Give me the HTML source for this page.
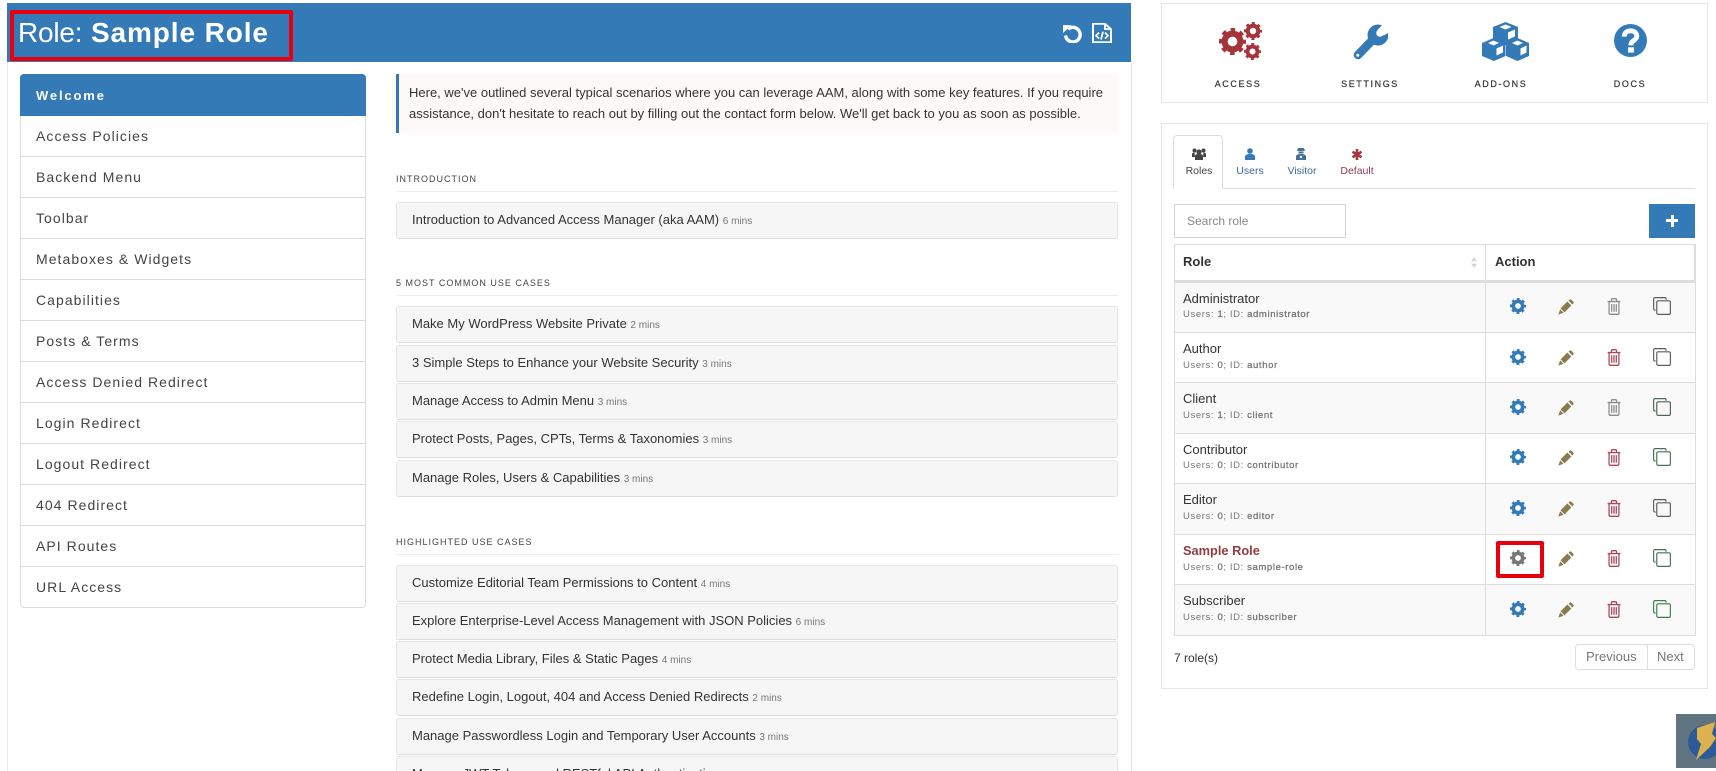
<!DOCTYPE html>
<html><head><meta charset="utf-8"><title>Role: Sample Role</title>
<style>
html,body{margin:0;padding:0;width:1716px;height:771px;overflow:hidden;background:#fff;font-family:"Liberation Sans",Arial,sans-serif;color:#333}
#p{position:relative;width:1716px;height:771px;overflow:hidden}
#p div,#p svg{position:absolute;box-sizing:border-box}
.t{white-space:nowrap}
.m{left:21px;width:344px;height:41px;border-top:1px solid #ddd;padding-left:15px;font-size:14px;letter-spacing:1.05px;line-height:40px;color:#444}
.h{left:396px;font-size:9px;letter-spacing:1px;color:#444;line-height:12px;white-space:nowrap}
.l{left:396px;width:722px;height:1px;background:#eee}
.i{left:396px;width:722px;height:37px;background:#f7f6f7;border:1px solid #e6e6e6;border-bottom-color:#ddd;border-radius:3px;padding-left:15px;font-size:13px;line-height:34px;color:#333;white-space:nowrap}
.i span{font-size:10px;color:#777}
.tab{font-size:10.5px;top:165px;line-height:12px;text-align:center;width:60px}
.lab{top:78px;font-size:9px;letter-spacing:1.6px;color:#333;line-height:12px;text-align:center;width:100px;-webkit-text-stroke:.2px #333}
.row{left:1174px;width:521px;border-bottom:1px solid #ddd}
.n{left:1183px;font-size:13px;line-height:16px;color:#333;white-space:nowrap}
.s{left:1183px;font-size:9.5px;line-height:12px;color:#777;letter-spacing:.62px;white-space:nowrap}
.s b{font-weight:normal;-webkit-text-stroke:.3px #777}
</style></head><body><div id="p">
<svg width="0" height="0" style="left:0;top:0"><defs>
<symbol id="g" viewBox="0 0 24 24"><circle cx="12" cy="12" r="7" fill="none" stroke="currentColor" stroke-width="5.4"/><circle cx="12" cy="12" r="10" fill="none" stroke="currentColor" stroke-width="4" stroke-dasharray="3.93 3.93" stroke-dashoffset="1.96"/></symbol>
<symbol id="pn" viewBox="0 0 24 24"><path fill="currentColor" d="M3.800 14L14 3.800l6 6L9.800 20zM3.200 15.500l5.100 5.100L.5 23.500zM15.800 2.500l1.400-1.400c.8-.8 2-.8 2.800 0l2.900 2.900c.8.8.8 2 0 2.800L21.500 8.200z"/></symbol>
<symbol id="tr" viewBox="0 0 16 20"><path fill="none" stroke="currentColor" stroke-width="1.500" d="M.5 4.200h15M2.200 4.200v13.300c0 1 .6 1.700 1.600 1.700h8.400c1 0 1.600-.7 1.600-1.700V4.200M5 4V2.200C5 1.300 5.600.8 6.400.8h3.200c.8 0 1.400.5 1.400 1.400V4M5.300 7.200v9M8 7.200v9M10.700 7.200v9"/></symbol>
<symbol id="cp" viewBox="0 0 20 20"><path fill="none" stroke="currentColor" stroke-width="1.300" d="M3 14.500H2.200C1.300 14.500.7 13.900.7 13V2.200C.7 1.300 1.300.7 2.200.7H13c.9 0 1.500.6 1.500 1.500V3"/><rect x="4.200" y="4.200" width="15.100" height="15.100" rx="1.500" fill="none" stroke="currentColor" stroke-width="1.300"/></symbol>
</defs></svg>

<!-- content frame lines -->
<div style="left:7px;top:62px;width:1px;height:709px;background:#eaeaea"></div>
<div style="left:1131px;top:62px;width:1px;height:709px;background:#e4e4e4"></div>

<!-- header -->
<div style="left:7px;top:3px;width:1124px;height:59px;background:#337ab7"></div>
<div style="left:10px;top:10px;width:283px;height:51px;border:4px solid #e8000f;border-radius:2px"></div>
<div class="t" style="left:18px;top:15px;line-height:36px;font-size:28px;color:#fff;letter-spacing:-.2px">Role: <b style="letter-spacing:.9px;margin-left:1px">Sample Role</b></div>
<svg style="left:1063px;top:24px" width="19" height="19" viewBox="0 0 19 19"><path fill="none" stroke="#fff" stroke-width="3.400" d="M5 5.200A7.300 7.300 0 1 1 2.600 11.500"/><path fill="#fff" d="M0 1l8.500.3L0 9z"/></svg>
<svg style="left:1092px;top:23px" width="20" height="20" viewBox="0 0 20 23" preserveAspectRatio="none"><path fill="none" stroke="#fff" stroke-width="2" d="M1 1h12l6 6v15H1zM13 1v6h6"/><path fill="none" stroke="#fff" stroke-width="1.800" d="M7 11l-3 3.500L7 18M13 11l3 3.500L13 18M11 10l-2 9"/></svg>

<!-- left menu -->
<div style="left:20px;top:74px;width:346px;height:534px;border:1px solid #ddd;border-radius:4px;background:#fff"></div>
<div class="m" style="top:116px;border-top:0">Access Policies</div>
<div class="m" style="top:156px">Backend Menu</div>
<div class="m" style="top:197px">Toolbar</div>
<div class="m" style="top:238px">Metaboxes &amp; Widgets</div>
<div class="m" style="top:279px">Capabilities</div>
<div class="m" style="top:320px">Posts &amp; Terms</div>
<div class="m" style="top:361px">Access Denied Redirect</div>
<div class="m" style="top:402px">Login Redirect</div>
<div class="m" style="top:443px">Logout Redirect</div>
<div class="m" style="top:484px">404 Redirect</div>
<div class="m" style="top:525px">API Routes</div>
<div class="m" style="top:566px">URL Access</div>
<div style="left:20px;top:74px;width:346px;height:42px;background:#337ab7;border-radius:4px 4px 0 0;padding-left:16px;font-size:13px;font-weight:bold;letter-spacing:1.85px;line-height:43px;color:#fff">Welcome</div>

<!-- callout -->
<div style="left:396px;top:74px;width:722px;height:59px;background:#fdf9f9;border-left:3px solid #337ab7;padding:9px 0 0 10px;font-size:13px;line-height:20.500px;color:#333;white-space:nowrap">Here, we've outlined several typical scenarios where you can leverage AAM, along with some key features. If you require<br>assistance, don't hesitate to reach out by filling out the contact form below. We'll get back to you as soon as possible.</div>

<div class="h" style="top:173px">INTRODUCTION</div><div class="l" style="top:191px"></div>
<div class="i" style="top:202px">Introduction to Advanced Access Manager (aka AAM) <span>6 mins</span></div>

<div class="h" style="top:277px">5 MOST COMMON USE CASES</div><div class="l" style="top:295px"></div>
<div class="i" style="top:306px">Make My WordPress Website Private <span>2 mins</span></div>
<div class="i" style="top:345px">3 Simple Steps to Enhance your Website Security <span>3 mins</span></div>
<div class="i" style="top:383px">Manage Access to Admin Menu <span>3 mins</span></div>
<div class="i" style="top:421px">Protect Posts, Pages, CPTs, Terms &amp; Taxonomies <span>3 mins</span></div>
<div class="i" style="top:460px">Manage Roles, Users &amp; Capabilities <span>3 mins</span></div>

<div class="h" style="top:536px">HIGHLIGHTED USE CASES</div><div class="l" style="top:554px"></div>
<div class="i" style="top:565px">Customize Editorial Team Permissions to Content <span>4 mins</span></div>
<div class="i" style="top:603px">Explore Enterprise-Level Access Management with JSON Policies <span>6 mins</span></div>
<div class="i" style="top:641px">Protect Media Library, Files &amp; Static Pages <span>4 mins</span></div>
<div class="i" style="top:679px">Redefine Login, Logout, 404 and Access Denied Redirects <span>2 mins</span></div>
<div class="i" style="top:718px">Manage Passwordless Login and Temporary User Accounts <span>3 mins</span></div>
<div class="i" style="top:756px">Manage JWT Tokens and RESTful API Authentication</div>

<!-- top right panel -->
<div style="left:1161px;top:3px;width:547px;height:100px;border:1px solid #e6e6e6"></div>
<svg style="left:1219px;top:28px;color:#a5353a" width="27" height="27"><use href="#g" width="27" height="27"/></svg>
<svg style="left:1244px;top:22px;color:#a5353a" width="18" height="18"><use href="#g" width="18" height="18"/></svg>
<svg style="left:1244px;top:43px;color:#a5353a" width="17" height="17"><use href="#g" width="17" height="17"/></svg>
<svg style="left:1353px;top:24px" width="35" height="36" viewBox="0 0 35 36"><circle cx="25" cy="11" r="10.500" fill="#337ab7"/><path d="M20 15.500L5 31" stroke="#337ab7" stroke-width="8.500" stroke-linecap="round"/><circle cx="27" cy="9" r="3.800" fill="#fff"/><path fill="#fff" d="M24.500 6L31 -1 37 -1 37 8 30.500 11.500z"/><circle cx="4.800" cy="31.200" r="1.500" fill="#fff"/></svg>
<svg style="left:1482px;top:22px" width="47" height="39" viewBox="0 0 47 39"><g fill="#337ab7"><path d="M23.500 0L36 5v13l-12.500 5L11 18V5z"/><path d="M11.500 16l12 5v13l-11.500 5L0 34V21z"/><path d="M35.500 16L47 21v13l-11.500 5L24 34V21z"/></g><g fill="#fff"><path d="M17.500 5l6-2.500 6 2.500-6 2.500zM26 10.500l7-3v7l-7 3zM6 21l5.500-2.500L17 21l-5.500 2.500zM14.500 26.500l6.500-3v7l-6.500 3zM30 21l5.500-2.500L41 21l-5.500 2.500zM38.500 26.500l6-3v7l-6 3z"/></g></svg>
<svg style="left:1614px;top:24px" width="33" height="33" viewBox="0 0 34 34"><circle cx="17" cy="17" r="17" fill="#337ab7"/><path fill="none" stroke="#fff" stroke-width="5" d="M10.500 13c0-4 3-6 6.500-6s6.500 2 6.500 5.500c0 4.500-6 4.500-6 8.500v1"/><rect x="14.500" y="24" width="6" height="5.500" fill="#fff"/></svg>
<div class="lab" style="left:1188px">ACCESS</div>
<div class="lab" style="left:1320px">SETTINGS</div>
<div class="lab" style="left:1451px">ADD-ONS</div>
<div class="lab" style="left:1580px">DOCS</div>

<!-- main right panel -->
<div style="left:1161px;top:123px;width:547px;height:566px;border:1px solid #e6e6e6"></div>
<div style="left:1174px;top:188px;width:521px;height:1px;background:#ddd"></div>
<div style="left:1173px;top:135px;width:50px;height:54px;border:1px solid #ddd;border-bottom:0;border-radius:4px 4px 0 0;background:#fff"></div>
<svg style="left:1192px;top:148px" width="14" height="12" viewBox="0 0 14 12"><g fill="#444"><circle cx="7" cy="4" r="2.600"/><circle cx="2.500" cy="2.500" r="2"/><circle cx="11.500" cy="2.500" r="2"/><path d="M3 12V8c0-1.500 1.500-2 4-2s4 .5 4 2v4zM0 9V6c0-1 1-1.500 2.500-1.500L3 9zM14 9V6c0-1-1-1.500-2.500-1.500L11 9z"/></g></svg>
<svg style="left:1245px;top:148px" width="10" height="12" viewBox="0 0 10 12"><circle cx="5" cy="3" r="2.800" fill="#337ab7"/><path fill="#337ab7" d="M0 12V8.500C0 7 2 6 5 6s5 1 5 2.500V12z"/></svg>
<svg style="left:1296px;top:147px" width="10" height="13" viewBox="0 0 10 13"><path fill="#4a6f96" d="M2 1h6l1 3H1zM2.500 4.500h5v2h-5zM0 13V9.500C0 8 2 7 5 7s5 1 5 2.500V13z"/><circle cx="5" cy="10" r="1.200" fill="#fff"/></svg>
<svg style="left:1352px;top:149px" width="10" height="11" viewBox="0 0 11 12"><path stroke="#a5353a" stroke-width="2.800" d="M5.500 0v12M.5 3l10 6M10.500 3l-10 6"/></svg>
<div class="tab" style="left:1169px;color:#444">Roles</div>
<div class="tab" style="left:1220px;color:#41699a">Users</div>
<div class="tab" style="left:1272px;color:#41699a">Visitor</div>
<div class="tab" style="left:1327px;color:#8a3a4f">Default</div>

<div style="left:1174px;top:204px;width:172px;height:34px;border:1px solid #d5d5d5;padding-left:12px;font-size:12px;line-height:33px;color:#888">Search role</div>
<div style="left:1649px;top:204px;width:46px;height:34px;background:#337ab7"></div>
<div style="left:1666px;top:219px;width:12px;height:3px;background:#fff"></div>
<div style="left:1670.500px;top:215px;width:3px;height:12px;background:#fff"></div>

<!-- table -->
<div style="left:1174px;top:244px;width:521px;height:37px;border:1px solid #ddd;border-bottom:0;background:#fff"></div>
<div class="t" style="left:1183px;top:253px;font-size:13px;font-weight:bold;line-height:18px;color:#333">Role</div>
<div class="t" style="left:1495px;top:253px;font-size:13px;font-weight:bold;line-height:18px;color:#333">Action</div>
<svg style="left:1470px;top:257px" width="8" height="11" viewBox="0 0 9 13"><path fill="#d4d4d4" d="M4.500 0L8 5H1zM4.500 13L1 8h7z"/></svg>
<div style="left:1174px;top:280px;width:521px;height:3px;background:#ddd"></div>
<div class="row" style="top:283px;height:50px;background:#f9f9f9"></div>
<div class="row" style="top:333px;height:50px;background:#fff"></div>
<div class="row" style="top:383px;height:51px;background:#f9f9f9"></div>
<div class="row" style="top:434px;height:50px;background:#fff"></div>
<div class="row" style="top:484px;height:51px;background:#f9f9f9"></div>
<div class="row" style="top:535px;height:50px;background:#fff"></div>
<div class="row" style="top:585px;height:51px;background:#f9f9f9"></div>
<div style="left:1174px;top:244px;width:1px;height:392px;background:#ddd"></div>
<div style="left:1695px;top:244px;width:1px;height:392px;background:#ddd"></div>
<div style="left:1485px;top:244px;width:1px;height:392px;background:#ddd"></div>

<div class="n" style="top:291px">Administrator</div><div class="s" style="top:309px">Users: <b>1</b>; ID: <b>administrator</b></div>
<div class="n" style="top:341px">Author</div><div class="s" style="top:360px">Users: <b>0</b>; ID: <b>author</b></div>
<div class="n" style="top:391px">Client</div><div class="s" style="top:410px">Users: <b>1</b>; ID: <b>client</b></div>
<div class="n" style="top:442px">Contributor</div><div class="s" style="top:460px">Users: <b>0</b>; ID: <b>contributor</b></div>
<div class="n" style="top:492px">Editor</div><div class="s" style="top:511px">Users: <b>0</b>; ID: <b>editor</b></div>
<div class="n" style="top:543px;color:#923c40;font-weight:bold;font-size:12.800px">Sample Role</div><div class="s" style="top:562px">Users: <b>0</b>; ID: <b>sample-role</b></div>
<div class="n" style="top:593px">Subscriber</div><div class="s" style="top:612px">Users: <b>0</b>; ID: <b>subscriber</b></div>

<!-- row icons -->
<svg style="left:1510px;top:298px;color:#337ab7" width="16" height="16"><use href="#g" width="16" height="16"/></svg>
<svg style="left:1510px;top:349px;color:#337ab7" width="16" height="16"><use href="#g" width="16" height="16"/></svg>
<svg style="left:1510px;top:399px;color:#337ab7" width="16" height="16"><use href="#g" width="16" height="16"/></svg>
<svg style="left:1510px;top:449px;color:#337ab7" width="16" height="16"><use href="#g" width="16" height="16"/></svg>
<svg style="left:1510px;top:500px;color:#337ab7" width="16" height="16"><use href="#g" width="16" height="16"/></svg>
<svg style="left:1510px;top:550px;color:#777" width="16" height="16"><use href="#g" width="16" height="16"/></svg>
<svg style="left:1510px;top:601px;color:#337ab7" width="16" height="16"><use href="#g" width="16" height="16"/></svg>
<div style="left:1496px;top:541px;width:48px;height:37px;border:4px solid #e8000f;border-radius:2px"></div>

<svg style="left:1558px;top:299px;color:#8a7b4c" width="16" height="16"><use href="#pn" width="16" height="16"/></svg>
<svg style="left:1558px;top:350px;color:#8a7b4c" width="16" height="16"><use href="#pn" width="16" height="16"/></svg>
<svg style="left:1558px;top:400px;color:#8a7b4c" width="16" height="16"><use href="#pn" width="16" height="16"/></svg>
<svg style="left:1558px;top:450px;color:#8a7b4c" width="16" height="16"><use href="#pn" width="16" height="16"/></svg>
<svg style="left:1558px;top:501px;color:#8a7b4c" width="16" height="16"><use href="#pn" width="16" height="16"/></svg>
<svg style="left:1558px;top:551px;color:#8a7b4c" width="16" height="16"><use href="#pn" width="16" height="16"/></svg>
<svg style="left:1558px;top:602px;color:#8a7b4c" width="16" height="16"><use href="#pn" width="16" height="16"/></svg>

<svg style="left:1607px;top:298px;color:#8c8c8c" width="14" height="17"><use href="#tr" width="14" height="17"/></svg>
<svg style="left:1607px;top:349px;color:#a8495c" width="14" height="17"><use href="#tr" width="14" height="17"/></svg>
<svg style="left:1607px;top:399px;color:#8c8c8c" width="14" height="17"><use href="#tr" width="14" height="17"/></svg>
<svg style="left:1607px;top:449px;color:#a8495c" width="14" height="17"><use href="#tr" width="14" height="17"/></svg>
<svg style="left:1607px;top:500px;color:#a8495c" width="14" height="17"><use href="#tr" width="14" height="17"/></svg>
<svg style="left:1607px;top:550px;color:#a8495c" width="14" height="17"><use href="#tr" width="14" height="17"/></svg>
<svg style="left:1607px;top:601px;color:#a8495c" width="14" height="17"><use href="#tr" width="14" height="17"/></svg>

<svg style="left:1653px;top:297px;color:#5a5f5c" width="18" height="18"><use href="#cp" width="18" height="18"/></svg>
<svg style="left:1653px;top:348px;color:#5a5f5c" width="18" height="18"><use href="#cp" width="18" height="18"/></svg>
<svg style="left:1653px;top:398px;color:#4f6658" width="18" height="18"><use href="#cp" width="18" height="18"/></svg>
<svg style="left:1653px;top:448px;color:#4a7058" width="18" height="18"><use href="#cp" width="18" height="18"/></svg>
<svg style="left:1653px;top:499px;color:#5a5f5c" width="18" height="18"><use href="#cp" width="18" height="18"/></svg>
<svg style="left:1653px;top:549px;color:#4a7058" width="18" height="18"><use href="#cp" width="18" height="18"/></svg>
<svg style="left:1653px;top:600px;color:#3f7d4f" width="18" height="18"><use href="#cp" width="18" height="18"/></svg>

<div class="t" style="left:1174px;top:651px;font-size:12px;line-height:14px;color:#333">7 role(s)</div>
<div style="left:1575px;top:644px;width:120px;height:26px;border:1px solid #ddd;border-radius:4px;background:#fff"></div>
<div style="left:1647px;top:644px;width:1px;height:26px;background:#ddd"></div>
<div class="t" style="left:1586px;top:649px;font-size:13px;line-height:15px;color:#777">Previous</div>
<div class="t" style="left:1657px;top:649px;font-size:13px;line-height:15px;color:#777">Next</div>

<!-- floating widget -->
<div style="left:1676px;top:714px;width:40px;height:54px;background:#5f7480;overflow:hidden"></div>
<svg style="left:1676px;top:714px" width="40" height="54" viewBox="0 0 40 54"><circle cx="29" cy="28" r="17" fill="#2f5a9a"/><path fill="#dcb14e" d="M21 14L39 8 36 20l4 4-6 9-14 13 5-16-4-5z"/></svg>
</div></body></html>
